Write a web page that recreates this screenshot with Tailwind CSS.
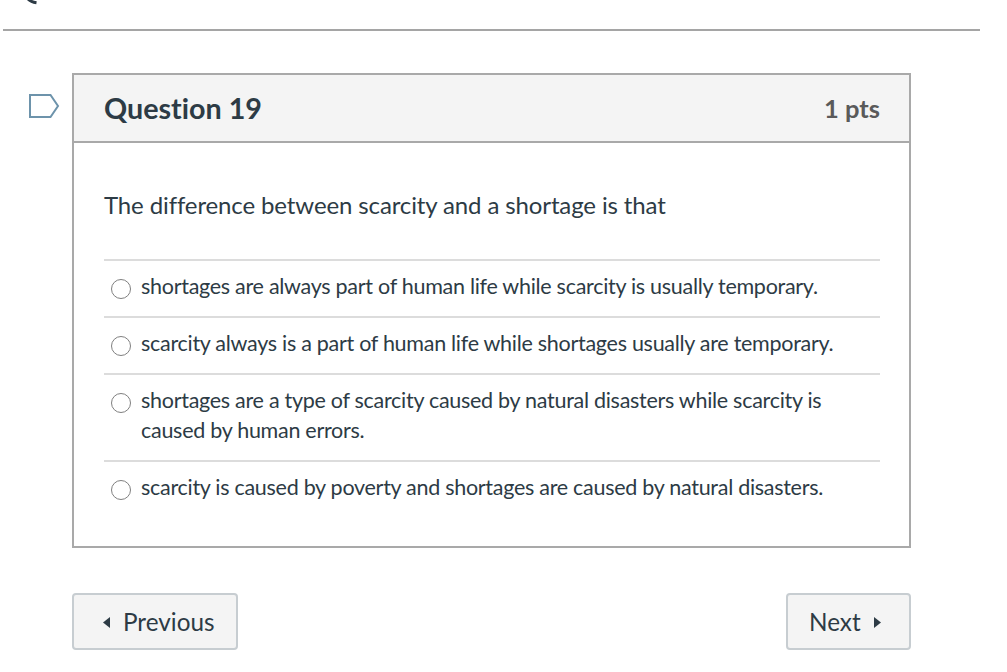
<!DOCTYPE html>
<html lang="en">
<head>
    <meta charset="UTF-8">
    <title>Question 19</title>
    <script src="https://cdn.jsdelivr.net/npm/@tailwindcss/browser@4"></script>
</head>
<body class="bg-white h-[672px] overflow-hidden font-['Lato',sans-serif] text-[#2d3b45] [font-variant-ligatures:none]">
    <!-- clipped arrow at the top edge -->
    <svg class="absolute left-[26px] top-0" width="14" height="5" viewBox="0 0 14 5">
        <path d="M2 -1 Q5 2 10.5 2.8" fill="none" stroke="#2d3b45" stroke-width="3"/>
    </svg>
    <div class="pt-[29px] pl-[3px] w-[980px]">
        <div class="h-[2px] bg-[#a5a5a5]"></div>
    </div>
    <div class="ml-[72px] w-[839px] mt-[42px] relative">
        <svg class="absolute left-[-44px] top-[20px]" width="32" height="26" viewBox="0 0 32 26">
            <path d="M2 2 H22.5 L30 13 L22.5 24 H2 Z" fill="none" stroke="#6d93ab" stroke-width="2"/>
        </svg>
        <div class="border-2 border-[#a9a9a9]">
            <div class="flex items-center justify-between h-[68px] bg-[#f4f4f4] border-b-2 border-[#a9a9a9] pl-[30px] pr-[29px]">
                <h2 class="text-[28.7px] font-bold pt-[2px]">Question 19</h2>
                <div class="text-[25.5px] font-bold text-[#5a5a5a]">1 pts</div>
            </div>
            <div class="pl-[30px] pr-[29px] pt-[44px] pb-[29px]">
                <p class="text-[24px] leading-[36px] pb-[36px] tracking-[-0.12px]">The difference between scarcity and a shortage is that</p>
                <div class="border-t-2 border-[#dcdcdc] flex gap-[10.5px] pl-[7px] pt-[10px] pb-[15px] text-[21.5px] leading-[30px] tracking-[-0.28px]">
                    <span class="mt-[8px] w-[19.5px] h-[19.5px] shrink-0 rounded-full border border-[#7f7f7f] bg-white"></span>
                    <span>shortages are always part of human life while scarcity is usually temporary.</span>
                </div>
                <div class="border-t-2 border-[#dcdcdc] flex gap-[10.5px] pl-[7px] pt-[10px] pb-[15px] text-[21.5px] leading-[30px] tracking-[-0.28px]">
                    <span class="mt-[8px] w-[19.5px] h-[19.5px] shrink-0 rounded-full border border-[#7f7f7f] bg-white"></span>
                    <span>scarcity always is a part of human life while shortages usually are temporary.</span>
                </div>
                <div class="border-t-2 border-[#dcdcdc] flex gap-[10.5px] pl-[7px] pt-[10px] pb-[15px] text-[21.5px] leading-[30px] tracking-[-0.28px]">
                    <span class="mt-[8px] w-[19.5px] h-[19.5px] shrink-0 rounded-full border border-[#7f7f7f] bg-white"></span>
                    <span>shortages are a type of scarcity caused by natural disasters while scarcity is caused by human errors.</span>
                </div>
                <div class="border-t-2 border-[#dcdcdc] flex gap-[10.5px] pl-[7px] pt-[10px] pb-[15px] text-[21.5px] leading-[30px] tracking-[-0.28px]">
                    <span class="mt-[8px] w-[19.5px] h-[19.5px] shrink-0 rounded-full border border-[#7f7f7f] bg-white"></span>
                    <span>scarcity is caused by poverty and shortages are caused by natural disasters.</span>
                </div>
            </div>
        </div>
        <div class="flex justify-between mt-[45px]">
            <button class="flex items-center gap-[13px] h-[57px] w-[166px] pl-[29px] pt-[2px] bg-[#f4f4f4] border-2 border-[#c7cdd1] rounded-[4px] text-[24.3px]">
                <svg width="7" height="11" viewBox="0 0 7 11"><path d="M7 0 V11 L0 5.5 Z" fill="#2d3b45"/></svg>
                Previous
            </button>
            <button class="flex items-center gap-[13px] h-[57px] w-[125px] pl-[21px] pt-[2px] bg-[#f4f4f4] border-2 border-[#c7cdd1] rounded-[4px] text-[24.3px]">
                Next
                <svg width="7" height="11" viewBox="0 0 7 11"><path d="M0 0 V11 L7 5.5 Z" fill="#2d3b45"/></svg>
            </button>
        </div>
    </div>
</body>
</html>
